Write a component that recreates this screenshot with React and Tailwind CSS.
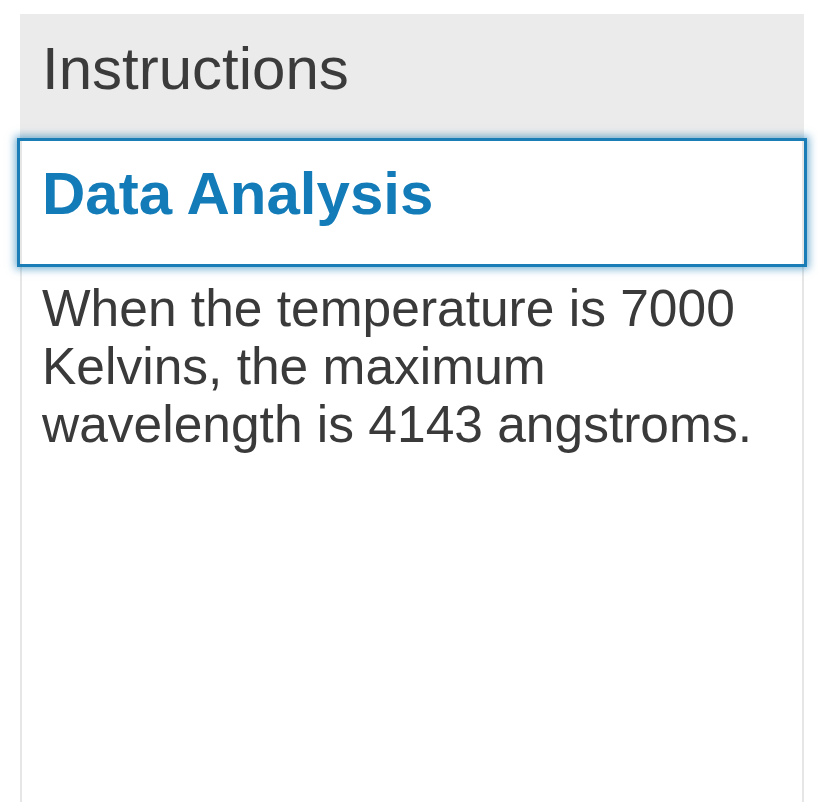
export default function App() {
  return (
    <div
      className="min-h-[802px] h-[802px] overflow-hidden bg-white pt-[14px] flex flex-col"
      style={{ fontFamily: '"Liberation Sans", Arial, Helvetica, sans-serif' }}
    >
      <div className="ml-[20px] w-[784px] flex flex-col flex-1">
        <div className="bg-[#ebebeb] h-[124px] pl-[22px] pt-[22px] text-[60px] leading-[66px] text-[#3b3b3b]">
          Instructions
        </div>
        <div className="relative z-10 mt-[3px] h-[123px] border-x-2 border-[#e6e6e6] bg-white pl-[20px] pt-[20px] shadow-[0_0_0_3px_#1a7db6,0_0_8px_5px_rgba(26,125,182,0.6)]">
          <h2 className="text-[60px] font-bold leading-[66px] text-[#137cb8]">
            Data Analysis
          </h2>
        </div>
        <div className="flex-1 border-x-2 border-[#e6e6e6] bg-white pl-[20px] pr-[20px] pt-[15px] text-[51.5px] leading-[58px] text-[#3a3a3a]">
          When the temperature is 7000 Kelvins, the maximum wavelength is 4143 angstroms.
        </div>
      </div>
    </div>
  );
}
